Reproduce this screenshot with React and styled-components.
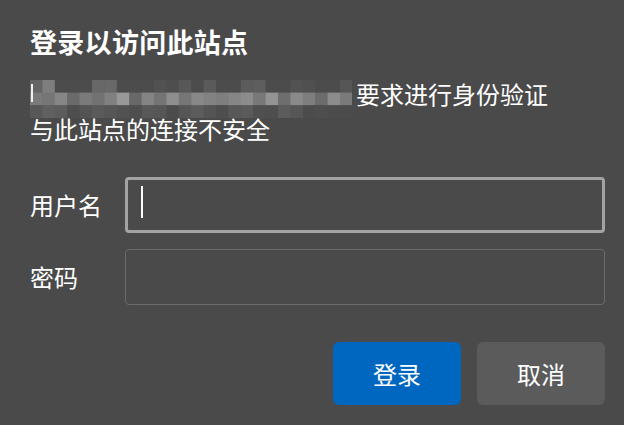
import React from "react";
import styled, { createGlobalStyle } from "styled-components";

const Global = createGlobalStyle`
  html, body { margin: 0; padding: 0; background: #4a4a4a; }
  * { box-sizing: border-box; }
`;

const Dialog = styled.div`
  width: 624px;
  height: 425px;
  background: #4a4a4a;
  color: #ffffff;
  font-family: "Noto Sans CJK SC", "Microsoft YaHei", sans-serif;
  padding: 24px 19px 0 30px;
  display: flex;
  flex-direction: column;
`;

const Title = styled.h1`
  margin: 0;
  font-size: 27px;
  font-weight: 700;
  line-height: 36px;
  letter-spacing: 0.3px;
`;

const Message = styled.p`
  margin: 16px 0 0;
  font-size: 24px;
  line-height: 35px;
  font-weight: 400;
`;

const MaskWrap = styled.span`
  position: relative;
  display: inline-block;
  width: 322px;
  height: 20px;
  margin-right: 4px;
  vertical-align: middle;
`;

const MaskSvg = styled.svg`
  position: absolute;
  left: 0;
  top: -7px;
`;

const Form = styled.div`
  margin-top: 31px;
  display: grid;
  grid-template-columns: 95px 1fr;
  row-gap: 16px;
  align-items: center;
`;

const Label = styled.label`
  font-size: 24px;
  line-height: 30px;
`;

const Field = styled.div`
  position: relative;
  height: 56px;
  border-radius: 4px;
  border: ${(p) => (p.$focused ? "3px solid #a3a3a3" : "1px solid #6b6b6b")};
  background: #4a4a4a;
`;

const Caret = styled.span`
  position: absolute;
  left: 13px;
  top: 6px;
  width: 2px;
  height: 32px;
  background: #ffffff;
`;

const Actions = styled.div`
  margin-top: 37px;
  display: flex;
  justify-content: flex-end;
  gap: 16px;
`;

const Button = styled.button`
  width: 128px;
  height: 63px;
  border: none;
  border-radius: 6px;
  background: ${(p) => (p.$primary ? "#0067c0" : "#5b5b5b")};
  color: #ffffff;
  font-family: "Noto Sans CJK SC", "Microsoft YaHei", sans-serif;
  font-size: 24px;
  padding: 0;
`;

function Mosaic() {
  const cols = 26;
  const size = 12.4;
  const rows = [
    [0x64, 0x7e, 0x4c, 0x4c, 0x4c, 0x68, 0x68, 0x4c, 0x4c, 0x4c, 0x52, 0x4e, 0x58, 0x4c, 0x5a, 0x4c, 0x4c, 0x5c, 0x5e, 0x4c, 0x4c, 0x52, 0x50, 0x4c, 0x4c, 0x56],
    [0x7a, 0x76, 0x86, 0x6a, 0x7a, 0x72, 0x80, 0x98, 0x68, 0x84, 0x74, 0x8e, 0x76, 0x88, 0x82, 0x7e, 0x86, 0x8c, 0x78, 0x94, 0x6e, 0x8a, 0x7e, 0x6c, 0x8c, 0x7a],
    [0x58, 0x60, 0x5c, 0x4e, 0x54, 0x5a, 0x56, 0x52, 0x4e, 0x58, 0x56, 0x4c, 0x56, 0x5c, 0x54, 0x4e, 0x58, 0x5a, 0x50, 0x4e, 0x5c, 0x56, 0x4c, 0x4e, 0x4c, 0x4c],
  ];
  const hex = (v) => {
    const h = v.toString(16).padStart(2, "0");
    return `#${h}${h}${h}`;
  };
  return (
    <MaskSvg width={cols * size} height={38} viewBox={`0 0 ${cols * size} 38`}>
      {rows.map((row, r) =>
        row.map((v, c) => (
          <rect key={`${r}-${c}`} x={c * size} y={r * 12.6} width={size + 0.5} height={13} fill={hex(v)} />
        ))
      )}
      <rect x={1} y={4} width={2} height={18} fill="#f0f0f0" />
    </MaskSvg>
  );
}

export default function App() {
  return (
    <>
      <Global />
      <Dialog>
        <Title>登录以访问此站点</Title>
        <Message>
          <MaskWrap>
            <Mosaic />
          </MaskWrap>
          要求进行身份验证
          <br />
          与此站点的连接不安全
        </Message>
        <Form>
          <Label>用户名</Label>
          <Field $focused>
            <Caret />
          </Field>
          <Label>密码</Label>
          <Field />
        </Form>
        <Actions>
          <Button $primary>登录</Button>
          <Button>取消</Button>
        </Actions>
      </Dialog>
    </>
  );
}
